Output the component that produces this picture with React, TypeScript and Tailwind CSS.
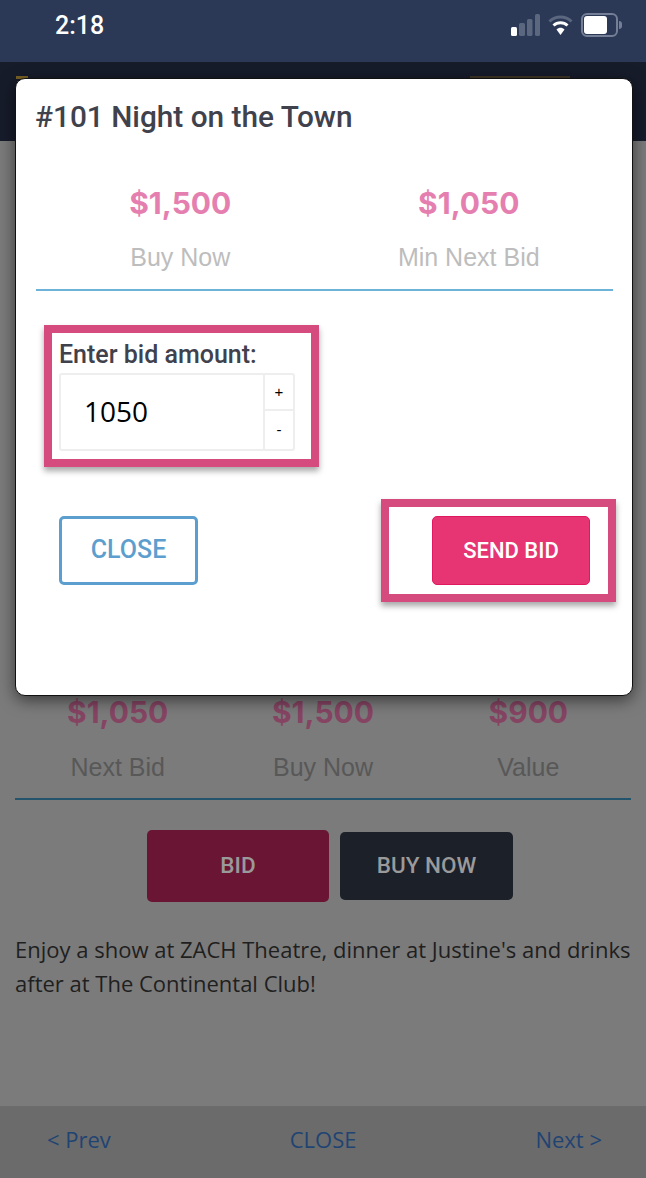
import React from "react";

const roboto = "font-['Roboto',sans-serif]";
const openSans = "font-['Open_Sans',sans-serif]";
const liberation = "font-['Liberation_Sans',Arial,sans-serif]";
const inter = "font-['Inter',sans-serif]";

function StatusIcons() {
  return (
    <div className="flex items-center gap-[8px]">
      <svg width="29" height="23" viewBox="0 0 29 23">
        <rect x="0" y="13" width="6" height="9" rx="1.5" fill="#fff" />
        <rect x="8" y="9" width="6" height="13" rx="1.5" fill="#5b667f" />
        <rect x="16" y="5" width="5.5" height="17" rx="1.5" fill="#5b667f" />
        <rect x="24" y="0" width="5" height="22" rx="1.5" fill="#5b667f" />
      </svg>
      <svg width="25" height="23" viewBox="0 0 25 23">
        <path d="M1.5 7.5C7.5 1.5 17.5 1.5 23.5 7.5" fill="none" stroke="#5b667f" strokeWidth="3" />
        <path d="M5.5 11.5C9.5 7.8 15.5 7.8 19.5 11.5" fill="none" stroke="#fff" strokeWidth="3" />
        <path d="M8.5 15.5L12.5 21L16.5 15.5C14.2 13.3 10.8 13.3 8.5 15.5Z" fill="#fff" />
      </svg>
      <div className="flex items-center">
        <div className="w-[37px] h-[24px] rounded-[6px] border-2 border-[#747e96] p-[1px]">
          <div className="w-[23px] h-full rounded-[3px] bg-white" />
        </div>
        <div className="ml-[1px] w-[3px] h-[8px] rounded-r-sm bg-[#747e96]" />
      </div>
    </div>
  );
}

function Stat({ value, label }: { value: string; label: string }) {
  return (
    <div className="text-center">
      <div className={`${inter} font-bold text-[30px] leading-[36px] text-[#e57fb0]`}>{value}</div>
      <div className={`${liberation} mt-[21px] text-[25px] leading-[30px] text-[#bdbdbd]`}>{label}</div>
    </div>
  );
}

function PageStat({ value, label }: { value: string; label: string }) {
  return (
    <div className="text-center">
      <div className={`${inter} font-bold text-[30px] leading-[36px] text-[#864463]`}>{value}</div>
      <div className={`${liberation} mt-[23px] text-[25px] leading-[28px] text-[#585858]`}>{label}</div>
    </div>
  );
}

export default function App() {
  return (
    <div className="relative w-[646px] h-[1178px] overflow-hidden bg-[#7b7b7b] flex flex-col">
      {/* status bar and page header behind the modal */}
      <div className="h-[62px] shrink-0 bg-[#2b3856] flex items-center justify-between pl-[55px] pr-[24px] pb-[12px]">
        <span className={`${roboto} font-medium text-[25px] leading-none text-white`}>2:18</span>
        <StatusIcons />
      </div>
      <div className="h-[79px] shrink-0 bg-[#171c2b] flex items-start justify-between pl-[16px] pr-[76px] pt-[14px]">
        <div className="w-[12px] h-[3px] bg-[#7a6226]" />
        <div className="w-[100px] h-[3px] bg-[#3f3426]" />
      </div>

      {/* page content, dimmed */}
      <div className="flex-1 flex flex-col pt-[553px]">
        <div className="mx-[15px] grid grid-cols-3 pb-[17px] border-b-2 border-[#24546b]">
          <PageStat value="$1,050" label="Next Bid" />
          <PageStat value="$1,500" label="Buy Now" />
          <PageStat value="$900" label="Value" />
        </div>
        <div className="mt-[30px] pl-[14px] flex justify-center items-center gap-[11px]">
          <div className={`${roboto} w-[182px] h-[72px] rounded-[5px] bg-[#6a1533] flex items-center justify-center font-medium text-[22.5px] text-[#9a9a9a]`}>BID</div>
          <div className={`${roboto} w-[173px] h-[68px] rounded-[5px] bg-[#1c2029] flex items-center justify-center font-medium text-[22.5px] text-[#9a9a9a]`}>BUY NOW</div>
        </div>
        <p className={`${openSans} mx-[15px] mt-[30px] text-[22px] leading-[34px] text-[#1f1f1f]`}>
          Enjoy a show at ZACH Theatre, dinner at Justine's and drinks after at The Continental Club!
        </p>
      </div>

      <div className={`${openSans} h-[72px] shrink-0 bg-[#6b6b6b] flex items-center justify-between pl-[47px] pr-[44px] pb-[5px] text-[22px] text-[#1f4473]`}>
        <span>&lt; Prev</span>
        <span>CLOSE</span>
        <span>Next &gt;</span>
      </div>

      {/* bid modal */}
      <div className="absolute left-[15px] top-[78px] w-[618px] h-[618px] rounded-[10px] bg-white border border-[#111] shadow-[0_4px_16px_rgba(0,0,0,0.55)] pl-[20px] pr-[19px]">
        <h1 className={`${roboto} -ml-[1px] mt-[19px] font-medium text-[29.8px] leading-[38px] text-[#3f424d]`}>#101 Night on the Town</h1>
        <div className="mt-[49px] grid grid-cols-2 pb-[17px] border-b-2 border-[#6db3d9]">
          <Stat value="$1,500" label="Buy Now" />
          <Stat value="$1,050" label="Min Next Bid" />
        </div>

        <div className="mt-[34px] ml-[8px] w-[275px] h-[142px] border-[8px] border-[#d64b7e] shadow-[0_4px_6px_rgba(0,0,0,0.35)] pl-[7px] pt-[8px]">
          <div className={`${roboto} font-medium text-[25px] leading-[28px] text-[#3f424d]`}>Enter bid amount:</div>
          <div className="mt-[4px] w-[236px] h-[78px] border-2 border-[#eeeeee] rounded-[3px] flex">
            <div className={`${openSans} flex-1 pl-[23px] pb-[3px] flex items-center text-[28px] text-black`}>1050</div>
            <div className={`${liberation} w-[30px] border-l-2 border-[#eeeeee] flex flex-col text-[15px] text-black`}>
              <div className="h-[36px] border-b-2 border-[#eeeeee] flex items-center justify-center">+</div>
              <div className="flex-1 flex items-center justify-center">-</div>
            </div>
          </div>
        </div>

        <div className="mt-[32px] flex items-start justify-between">
          <div className={`${roboto} ml-[23px] mt-[17px] w-[139px] h-[69px] rounded-[5px] border-[3px] border-[#5c9fcf] flex items-center justify-center pb-[1px] font-medium text-[25px] text-[#5c9fcf]`}>CLOSE</div>
          <div className="mr-[-3px] w-[235px] h-[103px] border-[8px] border-[#d64b7e] shadow-[0_4px_6px_rgba(0,0,0,0.35)] flex items-center justify-end pr-[18px]">
            <div className={`${roboto} w-[158px] h-[69px] rounded-[5px] bg-[#e63572] border border-[#e0185f] flex items-center justify-center pb-[1px] font-medium text-[22px] text-white`}>SEND BID</div>
          </div>
        </div>
      </div>
    </div>
  );
}
